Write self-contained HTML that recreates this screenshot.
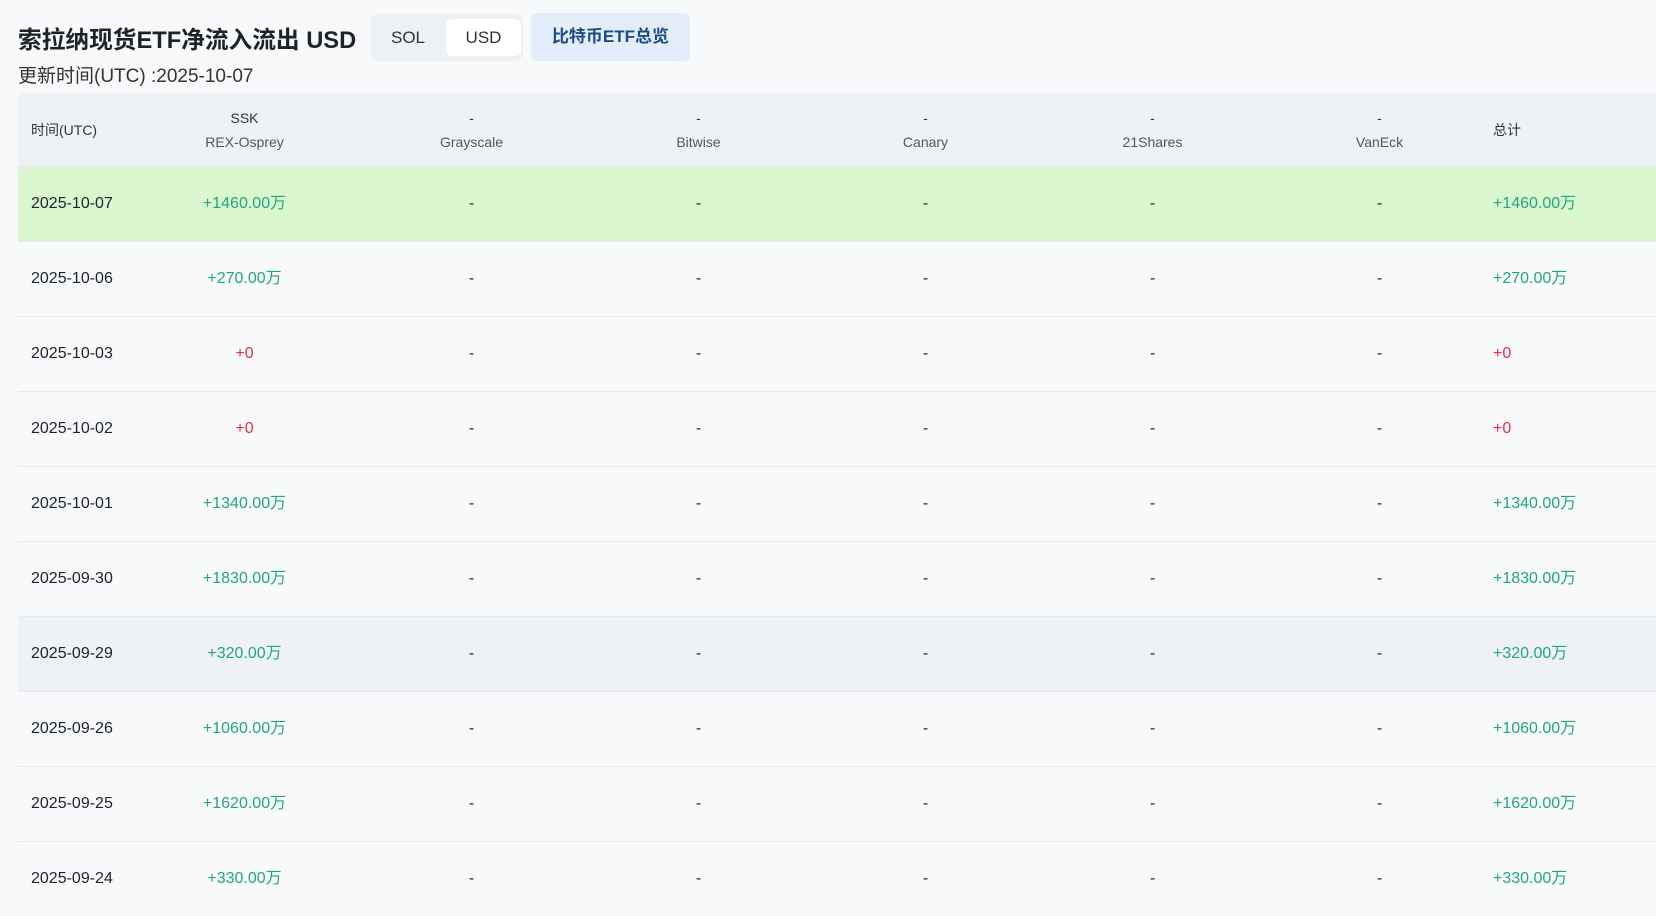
<!DOCTYPE html><html><head><meta charset="utf-8"><style>
body{margin:0;background:#f8f9fa;font-family:"Liberation Sans","Noto Sans CJK SC",sans-serif;color:#1e2329;width:1656px;height:898px;overflow:hidden;position:relative}
.t{position:absolute;left:18px;top:26px;font-size:23.7px;font-weight:bold;line-height:30px}
.tog{position:absolute;left:370px;top:14px;width:153px;height:47px;background:#eef1f4;border-radius:8px}
.tog span{position:absolute;top:5px;height:37px;line-height:37px;font-size:17px;color:#333;text-align:center}
.btn{position:absolute;left:531px;top:13px;width:159px;height:48px;background:#e2edf9;border-radius:6px;line-height:48px;text-align:center;font-size:17px;font-weight:bold;color:#1a4c88}
.sub{position:absolute;left:18px;top:65px;font-size:19px;color:#333;line-height:24px}
table{position:absolute;left:18px;top:93px;width:1638px;border-collapse:collapse;font-size:16px;table-layout:fixed}
th{background:#eef2f6;height:73px;padding:0;font-weight:normal;font-size:14px;color:#333;line-height:24px}
td{height:74px;padding:0;border-top:1px solid #e6e8ea;text-align:center;line-height:20px;vertical-align:middle}
td:first-child,th:first-child{text-align:left;padding-left:13px}
td:last-child,th:last-child{text-align:left;padding-left:0}
th span{color:#555}
.g{color:#20a77a}.r{color:#e0304a}
tr.h td{background:#dbf7cf}tr.v td{background:#eef2f6}
</style></head><body>
<div class="t">索拉纳现货ETF净流入流出 USD</div>
<div class="tog"><span style="left:0;width:76px">SOL</span><span style="left:76px;width:75px;background:#fff;border-radius:6px">USD</span></div>
<div class="btn">比特币ETF总览</div>
<div class="sub">更新时间(UTC) :2025-10-07</div>
<table>
<colgroup><col style="width:113px"><col style="width:227px"><col style="width:227px"><col style="width:227px"><col style="width:227px"><col style="width:227px"><col style="width:227px"><col></colgroup>
<tr><th>时间(UTC)</th><th>SSK<br><span>REX-Osprey</span></th><th>-<br><span>Grayscale</span></th><th>-<br><span>Bitwise</span></th><th>-<br><span>Canary</span></th><th>-<br><span>21Shares</span></th><th>-<br><span>VanEck</span></th><th>总计</th></tr>
<tr class="h"><td>2025-10-07</td><td class="g">+1460.00万</td><td>-</td><td>-</td><td>-</td><td>-</td><td>-</td><td class="g">+1460.00万</td></tr>
<tr><td>2025-10-06</td><td class="g">+270.00万</td><td>-</td><td>-</td><td>-</td><td>-</td><td>-</td><td class="g">+270.00万</td></tr>
<tr><td>2025-10-03</td><td class="r">+0</td><td>-</td><td>-</td><td>-</td><td>-</td><td>-</td><td class="r">+0</td></tr>
<tr><td>2025-10-02</td><td class="r">+0</td><td>-</td><td>-</td><td>-</td><td>-</td><td>-</td><td class="r">+0</td></tr>
<tr><td>2025-10-01</td><td class="g">+1340.00万</td><td>-</td><td>-</td><td>-</td><td>-</td><td>-</td><td class="g">+1340.00万</td></tr>
<tr><td>2025-09-30</td><td class="g">+1830.00万</td><td>-</td><td>-</td><td>-</td><td>-</td><td>-</td><td class="g">+1830.00万</td></tr>
<tr class="v"><td>2025-09-29</td><td class="g">+320.00万</td><td>-</td><td>-</td><td>-</td><td>-</td><td>-</td><td class="g">+320.00万</td></tr>
<tr><td>2025-09-26</td><td class="g">+1060.00万</td><td>-</td><td>-</td><td>-</td><td>-</td><td>-</td><td class="g">+1060.00万</td></tr>
<tr><td>2025-09-25</td><td class="g">+1620.00万</td><td>-</td><td>-</td><td>-</td><td>-</td><td>-</td><td class="g">+1620.00万</td></tr>
<tr><td>2025-09-24</td><td class="g">+330.00万</td><td>-</td><td>-</td><td>-</td><td>-</td><td>-</td><td class="g">+330.00万</td></tr>
</table>
</body></html>
